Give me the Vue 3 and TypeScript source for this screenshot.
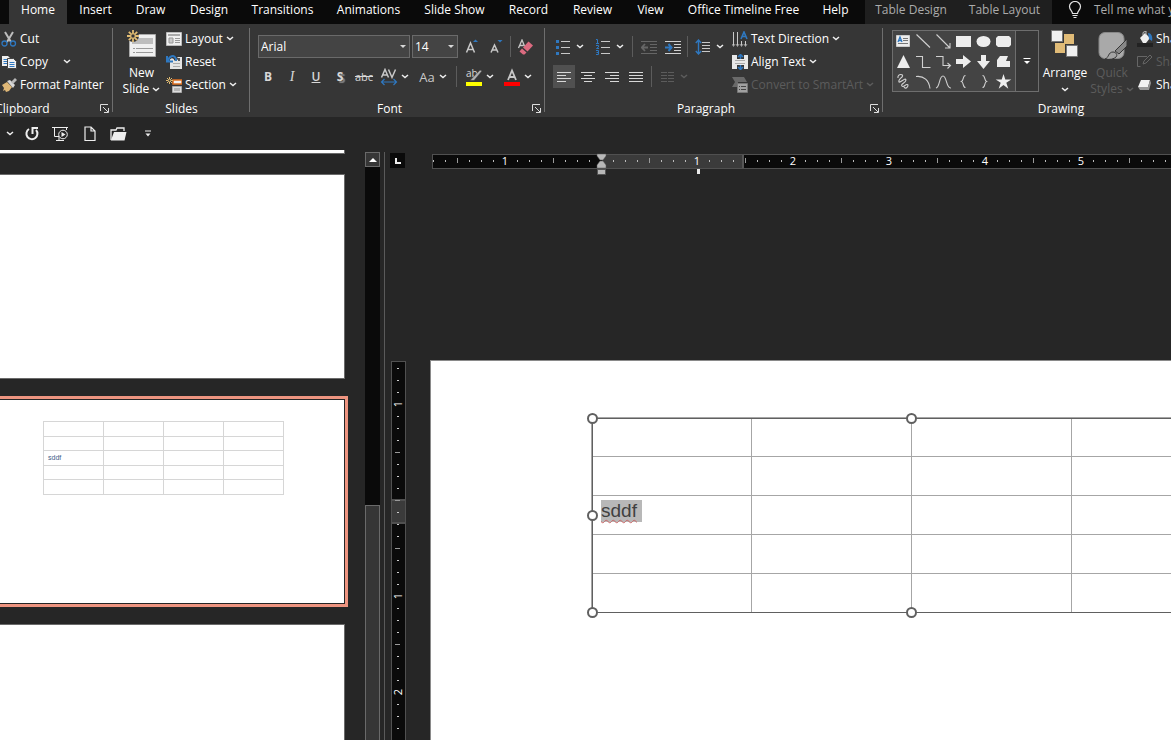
<script setup lang="ts">
import { ref } from 'vue'

const tabs: string[] = [
  'Home', 'Insert', 'Draw', 'Design', 'Transitions', 'Animations', 'Slide Show',
  'Record', 'Review', 'View', 'Office Timeline Free', 'Help',
]
const contextTabs: string[] = ['Table Design', 'Table Layout']
const active = ref('Home')

const fontName = ref('Arial')
const fontSize = ref('14')

const rows = 5
const cols = 4
const cellText = (r: number, c: number): string => (r === 3 && c === 1 ? 'sddf' : '')

interface Tick { at: number; kind: 'dot' | 'half' | 'label'; label: string }

const STEP = 12
function makeTicks(zero: number, from: number, to: number): Tick[] {
  const out: Tick[] = []
  for (let i = from; i <= to; i++) {
    if (i === 0) continue
    const kind = i % 8 === 0 ? 'label' : i % 4 === 0 ? 'half' : 'dot'
    out.push({ at: zero + i * STEP, kind, label: String(Math.abs(i / 8)) })
  }
  return out
}
const hTicks = makeTicks(169, -14, 120)
const vTicks = makeTicks(139, -11, 90)

const aligns: { name: string; d: string }[] = [
  { name: 'Align left', d: 'M1 2.5h14M1 5.5h9M1 8.5h14M1 11.5h9' },
  { name: 'Center', d: 'M1 2.5h14M4 5.5h8M1 8.5h14M4 11.5h8' },
  { name: 'Align right', d: 'M1 2.5h14M6 5.5h9M1 8.5h14M6 11.5h9' },
  { name: 'Justify', d: 'M1 2.5h14M1 5.5h14M1 8.5h14M1 11.5h14' },
]

interface Shape { name: string; fill?: string; line?: string }
const shapes: Shape[] = [
  { name: 'Text box' },
  { name: 'Line', line: 'M3.5 3.5L17 16.5' },
  { name: 'Arrow', line: 'M3.5 3.5L16.5 16.5M17 12v5h-5' },
  { name: 'Rectangle', fill: 'M3 5h15v11H3z' },
  { name: 'Oval', fill: 'M3.5 10.5a7 5.5 0 1 0 14 0a7 5.5 0 1 0 -14 0z' },
  { name: 'Rounded rectangle', fill: 'M5 5h11l2 2v7l-2 2H5l-2-2V7z' },
  { name: 'Triangle', fill: 'M10.5 4L17 17H4z' },
  { name: 'Elbow connector', line: 'M3 5.5h6.500v11h8' },
  { name: 'Elbow arrow', line: 'M3 5.500h7v9h7M14.500 12l3 2.500l-3 3' },
  { name: 'Right arrow', fill: 'M3 8h7V4l8 6.500l-8 6.500v-4H3z' },
  { name: 'Down arrow', fill: 'M8 4h5v6h4l-6.500 8L4 10h4z' },
  { name: 'Freeform', fill: 'M7 5h8l-2 5h4v6H4V9z' },
  { name: 'Scribble', line: 'M5 7c-1-5 7-4 4-1c-2 2-4 3-3 5c2 1 6-5 7-2c0 3-6 4-4 6c1 2 5-3 6-1c0 3-3 4-4 2' },
  { name: 'Arc', line: 'M3 5.500c8-1 13 4 14 12' },
  { name: 'Curve', line: 'M3 17c4-1 3-12 7-12s3 13 8 12' },
  { name: 'Left brace', line: 'M12.500 4.500c-3 0-1.500 5-4 6c2.500 1 1 6 4 6' },
  { name: 'Right brace', line: 'M9.500 4.500c3 0 1.500 5 4 6c-2.500 1-1 6-4 6' },
  { name: 'Star', fill: 'M10.500 3l1.800 5.500h6l-5 3.200l2 6l-4.800-3.700l-4.800 3.700l2-6l-5-3.200h6z' },
]
</script>

<template>
  <div class="app">
    <nav class="tabs" aria-label="Ribbon tabs">
      <button v-for="t in tabs" :key="t" class="tab" :class="{ on: active === t }" @click="active = t">{{ t }}</button>
      <span></span>
      <button v-for="t in contextTabs" :key="t" class="tab context" @click="active = t">{{ t }}</button>
      <button class="tell">
        <svg width="14" height="18" viewBox="0 0 14 18" fill="none" stroke="#e4e4e4" stroke-width="1.2"><path d="M4.500 12.500C4.500 10 1.500 9 1.500 5.500a5.500 5 0 0 1 11 0c0 3.500-3 4.500-3 7zM4.500 14.500h5M5.500 16.500h3" /></svg>
        <span>Tell me what you want to do</span>
      </button>
    </nav>

    <section class="ribbon">
      <div class="group clipboard">
        <div class="list">
          <button class="cmd">
            <svg width="16" height="16" viewBox="0 0 16 16" fill="none"><path d="M4 1l6 10M12 1L6 11" stroke="#bdbdbd" stroke-width="2" /><circle cx="3.500" cy="12.500" r="2.500" stroke="#2f78c0" stroke-width="1.300" /><circle cx="12" cy="12.500" r="2.500" stroke="#2f78c0" stroke-width="1.300" /></svg>
            <span>Cut</span>
          </button>
          <button class="cmd">
            <svg width="16" height="16" viewBox="0 0 16 16"><path d="M1 2h6l2 2v8H1z" fill="#efefef" /><path d="M2.500 5.500h4M2.500 7.500h4M2.500 9.500h4" stroke="#2f78c0" /><path d="M6.500 4.500h6l3 3v7h-9z" fill="#efefef" stroke="#444" /><path d="M8.500 8.500h5M8.500 10.500h5M8.500 12.500h5" stroke="#2f78c0" /></svg>
            <span>Copy</span>
            <svg class="chev far" viewBox="0 0 8 5"><path d="M1 1l3 2.500L7 1" /></svg>
          </button>
          <button class="cmd">
            <svg width="16" height="16" viewBox="0 0 16 16"><path d="M1 8l5-3 5 5-3 4-3 1-1-2-2 1 1-3z" fill="#e0b877" /><path d="M6 4l3-1 5 5-2 3z" fill="#d8d8d8" /><path d="M10 5l4-4 2 2-4 4z" fill="#b8b8b8" /></svg>
            <span>Format Painter</span>
          </button>
        </div>
        <footer class="label"><span class="cut">Clipboard</span>
          <button class="launch" aria-label="Clipboard settings"><svg width="9" height="9" viewBox="0 0 9 9"><path d="M.5 7V.5H8M3 3l5 5M8.500 4v4.500H4" /></svg></button>
        </footer>
      </div>

      <div class="group slides">
        <div class="body">
          <button class="big">
            <svg width="32" height="30" viewBox="0 0 32 30"><path d="M3.500 5.500h26v22h-26z" fill="#f0f0f0" stroke="#aaa" /><path d="M6 9h21v6H6z" fill="#bdbdbd" /><path d="M7 19.500h2M10 19.500h17M7 23.500h2M10 23.500h17" stroke="#999" /><circle cx="7" cy="7" r="6" fill="#363636" /><path d="M7 1v12M1 7h12M2.800 2.800l8.400 8.400M11.200 2.800l-8.400 8.400" stroke="#e0bb72" stroke-width="1.800" /><circle cx="7" cy="7" r="2.200" fill="#363636" stroke="#e0bb72" /></svg>
            <span>New</span>
            <span>Slide <svg class="chev" viewBox="0 0 8 5"><path d="M1 1l3 2.500L7 1" /></svg></span>
          </button>
          <div class="list">
            <button class="cmd">
              <svg width="16" height="16" viewBox="0 0 16 16"><path d="M.5 1.500h15v13H.5z" fill="#f0f0f0" stroke="#bbb" /><path d="M2 3h12v2H2z" fill="#aaa" /><path d="M3 7h4v5H3z" fill="#ccc" stroke="#999" /><path d="M9 7.500h5M9 9.500h5M9 11.500h5" stroke="#999" /></svg>
              <span>Layout</span><svg class="chev" viewBox="0 0 8 5"><path d="M1 1l3 2.500L7 1" /></svg>
            </button>
            <button class="cmd">
              <svg width="16" height="16" viewBox="0 0 16 16"><path d="M4 3h12v12H4z" fill="#e4e4e4" /><path d="M7 9.500h7M7 12.500h7" stroke="#aaa" /><path d="M13 4v3" stroke="#555" stroke-width="2" /><path d="M1.500 7C2 2 8 0 10.500 6" stroke="#363636" stroke-width="4" fill="none" /><path d="M2 7C3 2 8 0 10 5v2M1 2v5.500h6" fill="none" stroke="#2f78c0" stroke-width="2" /></svg>
              <span>Reset</span>
            </button>
            <button class="cmd">
              <svg width="16" height="16" viewBox="0 0 16 16"><path d="M7 3h9v4H7z" fill="#f0f0f0" stroke="#e07020" stroke-width="1.500" /><path d="M6.500 9.500h9v6h-9z" fill="#ddd" stroke="#aaa" /><path d="M8 11h6v3H8z" fill="#b5b5b5" /><path d="M3.500 0v7M0 3.500h7M1 1l5 5M6 1L1 6" stroke="#e0bb72" /><circle cx="3.500" cy="3.500" r="1" fill="#363636" /></svg>
              <span>Section</span><svg class="chev" viewBox="0 0 8 5"><path d="M1 1l3 2.500L7 1" /></svg>
            </button>
          </div>
        </div>
        <footer class="label"><span>Slides</span></footer>
      </div>

      <div class="group font">
        <div class="tools">
          <div class="line first">
            <span class="combo wide">
              <select v-model="fontName" aria-label="Font"><option>Arial</option><option>Calibri</option></select>
              <svg width="6" height="4" viewBox="0 0 6 4"><path d="M0 0h6L3 3z" fill="#d8d8d8" /></svg>
            </span>
            <span class="combo small">
              <select v-model="fontSize" aria-label="Font size"><option>14</option><option>18</option></select>
              <svg width="6" height="4" viewBox="0 0 6 4"><path d="M0 0h6L3 3z" fill="#d8d8d8" /></svg>
            </span>
            <button class="tool" aria-label="Increase font size"><svg width="16" height="16" viewBox="0 0 16 16"><path d="M2.500 13.500L6.500 4l4 9.500M4 10.500h5" fill="none" stroke="#c8c8c8" stroke-width="1.500" /><path d="M9 3h5l-2.500-2.500z" fill="#2f78c0" /></svg></button>
            <button class="tool" aria-label="Decrease font size"><svg width="16" height="16" viewBox="0 0 16 16"><path d="M3 13.500L6.500 6l3.500 7.500M4.500 11h4" fill="none" stroke="#c8c8c8" stroke-width="1.500" /><path d="M9.500 1h5L12 3.500z" fill="#2f78c0" /></svg></button>
            <i class="sep"></i>
            <button class="tool" aria-label="Clear formatting"><svg width="16" height="16" viewBox="0 0 16 16"><path d="M1.500 9L5 1l2.500 6M2.500 6.500h4" fill="none" stroke="#c8c8c8" stroke-width="1.300" /><path d="M11.500 2.500l4.500 4-5.500 6-4.500-4z" fill="#dc6b80" /><path d="M5 9.500l4.500 4-2 2H6l-3.500-3z" fill="#dc6b80" /></svg></button>
          </div>
          <div class="line second">
            <button class="tool glyph"><b>B</b></button>
            <button class="tool glyph serif"><i>I</i></button>
            <button class="tool glyph"><u>U</u></button>
            <button class="tool glyph shadow"><b>S</b></button>
            <button class="tool strike"><s>abc</s></button>
            <button class="split" aria-label="Character spacing"><svg width="18" height="18" viewBox="0 0 18 18"><path d="M1.500 9.500L5 1.500l3.500 8M2.800 7h4.400M8.500 1.500l3.500 8 3.500-8" fill="none" stroke="#c8c8c8" stroke-width="1.500" /><path d="M1.500 14h15M4.500 11l-3 3 3 3M13.500 11l3 3-3 3" fill="none" stroke="#2f78c0" stroke-width="1.200" /></svg><svg class="chev" viewBox="0 0 8 5"><path d="M1 1l3 2.500L7 1" /></svg></button>
            <button class="split"><span class="case">Aa</span><svg class="chev" viewBox="0 0 8 5"><path d="M1 1l3 2.500L7 1" /></svg></button>
            <i class="sep gap"></i>
            <button class="split" aria-label="Highlight color"><svg width="18" height="18" viewBox="0 0 18 18"><text x="1" y="9" fill="#d8d8d8" font-size="10">ab</text><path d="M5 12.500L15 2l2 1-8 9.500z" fill="#b0b0b0" stroke="#363636" stroke-width=".5" /><path d="M1 14h16v4H1z" fill="#ff0" /></svg><svg class="chev" viewBox="0 0 8 5"><path d="M1 1l3 2.500L7 1" /></svg></button>
            <button class="split" aria-label="Font color"><svg width="18" height="18" viewBox="0 0 18 18"><path d="M5 12L9 2.500 13 12M6.500 9h5" fill="none" stroke="#c8c8c8" stroke-width="1.800" /><path d="M1 14h16v4H1z" fill="red" /></svg><svg class="chev" viewBox="0 0 8 5"><path d="M1 1l3 2.500L7 1" /></svg></button>
          </div>
        </div>
        <footer class="label"><span>Font</span>
          <button class="launch" aria-label="Font settings"><svg width="9" height="9" viewBox="0 0 9 9"><path d="M.5 7V.5H8M3 3l5 5M8.500 4v4.500H4" /></svg></button>
        </footer>
      </div>

      <div class="group paragraph">
        <div class="body">
          <div class="tools">
            <div class="line">
              <button class="split" aria-label="Bullets"><svg width="16" height="16" viewBox="0 0 16 16"><path d="M1 1h3v3H1zM1 7h3v3H1zM1 13h3v3H1z" fill="#2f78c0" /><path d="M6 2.500h9M6 8.500h9M6 14.500h9" stroke="#c8c8c8" /></svg><svg class="chev" viewBox="0 0 8 5"><path d="M1 1l3 2.500L7 1" /></svg></button>
              <button class="split next" aria-label="Numbering"><svg width="16" height="16" viewBox="0 0 16 16"><path d="M1 .5h1.500V4M1 4.500h3M1 6.500h2.500v1.500L1.500 9.500H4M1 11.500h2.500v4H1M1.500 13.500h2" stroke="#2f78c0" fill="none" /><path d="M6 2.500h9M6 8.500h9M6 14.500h9" stroke="#c8c8c8" /></svg><svg class="chev" viewBox="0 0 8 5"><path d="M1 1l3 2.500L7 1" /></svg></button>
              <i class="sep gap"></i>
              <button class="tool" aria-label="Decrease indent" disabled><svg width="16" height="16" viewBox="0 0 16 16"><path d="M0 2.500h16M9 5.500h7M9 8.500h7M9 11.500h7M0 14.500h16" stroke="#666" /><path d="M1 8.500h6M4 5L.8 8.500 4 12" fill="none" stroke="#666" stroke-width="1.800" /></svg></button>
              <button class="tool" aria-label="Increase indent"><svg width="16" height="16" viewBox="0 0 16 16"><path d="M0 2.500h16M9 5.500h7M9 8.500h7M9 11.500h7M0 14.500h16" stroke="#d0d0d0" /><path d="M0 8.500h6M3.500 5l3 3.500-3 3.500" fill="none" stroke="#2f78c0" stroke-width="2" /></svg></button>
              <i class="sep"></i>
              <button class="split" aria-label="Line spacing"><svg width="16" height="16" viewBox="0 0 16 16"><path d="M3.500 1v14M.8 4l2.700-3 2.700 3M.8 12l2.700 3 2.700-3" fill="none" stroke="#2f78c0" stroke-width="1.400" /><path d="M7 3.500h8M7 6.500h8M7 9.500h8M7 12.500h8" stroke="#c8c8c8" /></svg><svg class="chev" viewBox="0 0 8 5"><path d="M1 1l3 2.500L7 1" /></svg></button>
            </div>
            <div class="line second">
              <button v-for="(a, i) in aligns" :key="a.name" class="tool align" :class="{ on: i === 0 }" :aria-label="a.name"><svg width="16" height="14" viewBox="0 0 16 14"><path :d="a.d" stroke="#d8d8d8" /></svg></button>
              <i class="sep"></i>
              <button class="split" aria-label="Columns" disabled><svg width="16" height="14" viewBox="0 0 16 14"><path d="M2 2.500h6M2 5.500h6M2 8.500h6M2 11.500h6M9 2.500h6M9 5.500h6M9 8.500h6M9 11.500h6" stroke="#5c5c5c" /></svg><svg class="chev" viewBox="0 0 8 5"><path d="M1 1l3 2.500L7 1" /></svg></button>
            </div>
          </div>
          <div class="list">
            <button class="cmd">
              <svg width="16" height="16" viewBox="0 0 16 16"><path d="M1.500 1v14M5.500 1v14M9.500 10v5M13.500 10v5" stroke="#c8c8c8" /><path d="M0 13l1.500 2.500L3 13M4 13l1.500 2.500L7 13M8 13l1.500 2.500L11 13M12 13l1.500 2.500L15 13" fill="none" stroke="#999" /><path d="M9 8l3-7 3 7M10 5.500h4" fill="none" stroke="#2f78c0" stroke-width="1.600" /></svg>
              <span>Text Direction</span><svg class="chev" viewBox="0 0 8 5"><path d="M1 1l3 2.500L7 1" /></svg>
            </button>
            <button class="cmd">
              <svg width="16" height="16" viewBox="0 0 16 16"><path d="M0 1h16v14H0z" fill="#e8e8e8" /><path d="M5 0h7v5H5zM5 11h7v5H5z" fill="#363636" /><path d="M3 6.500h10M3 9.500h10" stroke="#aaa" /><path d="M8.500 0v5M6 3l2.500-2.500L11 3M8.500 11v5M6 13l2.500 2.500L11 13" fill="none" stroke="#2f78c0" stroke-width="1.500" /></svg>
              <span>Align Text</span><svg class="chev" viewBox="0 0 8 5"><path d="M1 1l3 2.500L7 1" /></svg>
            </button>
            <button class="cmd" disabled>
              <svg width="16" height="16" viewBox="0 0 16 16"><path d="M0 0h12l3 5H6v5H0l3-5z" fill="#6a6a6a" /><path d="M5.500 6.500h10v9h-10z" fill="#a0a0a0" stroke="#777" /><path d="M7 9.500h1M9 9.500h5M7 12.500h1M9 12.500h5" stroke="#444" /></svg>
              <span>Convert to SmartArt</span><svg class="chev" viewBox="0 0 8 5"><path d="M1 1l3 2.500L7 1" /></svg>
            </button>
          </div>
        </div>
        <footer class="label"><span>Paragraph</span>
          <button class="launch" aria-label="Paragraph settings"><svg width="9" height="9" viewBox="0 0 9 9"><path d="M.5 7V.5H8M3 3l5 5M8.500 4v4.500H4" /></svg></button>
        </footer>
      </div>

      <div class="group drawing">
        <div class="body">
          <div class="gallery">
            <div class="shapes">
              <button v-for="(s, i) in shapes" :key="s.name" :aria-label="s.name">
                <svg width="20" height="20" viewBox="0 0 20 20">
                  <template v-if="i === 0"><path d="M3.500 4.500h13v11h-13z" fill="#ededed" stroke="#ccc" /><path d="M5 11l2-5 2 5M6 9.500h2" fill="none" stroke="#2f78c0" stroke-width="1.300" /><path d="M10 7.500h5M10 9.500h5M5 12.500h10" stroke="#777" /></template>
                  <path v-else-if="s.fill" :d="s.fill" fill="#ededed" />
                  <path v-else :d="s.line" fill="none" stroke="#d0d0d0" stroke-width="1.100" />
                </svg>
              </button>
            </div>
            <button class="more" aria-label="More shapes"><svg width="8" height="8" viewBox="0 0 8 8"><path d="M.5 1.500h7" stroke="#fff" /><path d="M1 4l3 3 3-3z" fill="#fff" /></svg></button>
          </div>
          <button class="big arrange">
            <svg width="30" height="30" viewBox="0 0 30 30"><path d="M14 5h10v10H14zM5 14h10v10H5z" fill="#e0bb77" /><path d="M1.500 1.500h11v11h-11zM16.500 16.500h11v11h-11z" fill="#f0f0f0" stroke="#777" /></svg>
            <span>Arrange</span>
            <svg class="chev" viewBox="0 0 8 5"><path d="M1 1l3 2.500L7 1" /></svg>
          </button>
          <button class="big quick" disabled>
            <svg width="30" height="30" viewBox="0 0 30 30"><rect x="2" y="3.500" width="25" height="26" rx="6" fill="#a9a9a9" stroke="#888" /><path d="M30 10v7l-8 8-4-3z" fill="#888" stroke="#363636" /><path d="M8 30c4-1 3-7 8-7 3 0 5 3 3 5-2 2-6 3-11 2z" fill="#a4a4a4" stroke="#363636" /></svg>
            <span>Quick</span>
            <span>Styles <svg class="chev" viewBox="0 0 8 5"><path d="M1 1l3 2.500L7 1" /></svg></span>
          </button>
          <div class="list">
            <button class="cmd">
              <svg width="16" height="16" viewBox="0 0 16 16"><path d="M3 7l5-5 5 5-4 5H6z" fill="#eee" /><path d="M6 4V1.500L9 0v4" fill="none" stroke="#bbb" /><path d="M11 2c3 0 5 3 4 8l-3-2z" fill="#2f78c0" /><path d="M0 12h16v4H0z" fill="#222" /></svg>
              <span>Shape Fill</span>
            </button>
            <button class="cmd" disabled>
              <svg width="16" height="16" viewBox="0 0 16 16" fill="none" stroke="#666"><path d="M10 2.500H.5v10h3M6 10l1-3 6-6 2 2-6 6z" /></svg>
              <span>Shape Outline</span>
            </button>
            <button class="cmd">
              <svg width="16" height="16" viewBox="0 0 16 16"><path d="M4 3h9l-2 7H1z" fill="#f2f2f2" /><path d="M1 10h10l2-7 1 3-2 7H3z" fill="#999" /></svg>
              <span>Shape Effects</span>
            </button>
          </div>
        </div>
        <footer class="label"><span>Drawing</span></footer>
      </div>
    </section>

    <div class="quickbar">
      <button aria-label="Undo options"><svg class="chev" viewBox="0 0 8 5"><path d="M1 1l3 2.500L7 1" /></svg></button>
      <button aria-label="Repeat"><svg width="16" height="16" viewBox="0 0 16 16" fill="none" stroke="#eee" stroke-width="2"><path d="M5 3a5.500 5.500 0 1 0 7 1M8.500 8V2H14" /></svg></button>
      <button aria-label="Start slide show"><svg width="17" height="16" viewBox="0 0 17 16" fill="none" stroke="#eee"><path d="M0 1.500h16M2.500 2v8.500H7M7 11v3M4 14.500h8M14.500 2v2" /><circle cx="11" cy="8.500" r="4.300" /><path d="M9.500 6l4 2.500-4 2.500z" fill="#eee" stroke="none" /></svg></button>
      <button aria-label="New file"><svg width="12" height="16" viewBox="0 0 12 16" fill="none" stroke="#eee" stroke-width="1.200"><path d="M1 1h6l4 4v9.500H1zM7 1v4h4" /></svg></button>
      <button aria-label="Open file"><svg width="17" height="14" viewBox="0 0 17 14"><path d="M1 13V3h5l1-2h7v3" fill="none" stroke="#eee" stroke-width="1.300" /><path d="M4 5h12.500l-2 8.500H.8z" fill="#eee" /></svg></button>
      <button aria-label="Customize toolbar"><svg width="6" height="7" viewBox="0 0 6 7"><path d="M0 1h6" stroke="#eee" /><path d="M.5 3.500h5L3 6.500z" fill="#eee" /></svg></button>
    </div>

    <main class="work">
      <aside class="thumbs">
        <div class="strip">
          <div v-for="n in 4" :key="n" class="thumb" :class="{ on: n === 3 }">
            <table v-if="n === 3" class="mini">
              <tbody><tr v-for="r in rows" :key="r"><td v-for="c in cols" :key="c">{{ cellText(r, c) }}</td></tr></tbody>
            </table>
          </div>
        </div>
      </aside>
      <div class="scroll">
        <button aria-label="Scroll up"><svg width="8" height="4" viewBox="0 0 8 4"><path d="M4 0l4 4H0z" fill="#fff" /></svg></button>
        <div class="track"></div>
        <div class="grip"></div>
      </div>

      <section class="editor">
        <button class="tabstop" aria-label="Tab stop"><svg width="6" height="6" viewBox="0 0 6 6"><path d="M1 0v5h5" fill="none" stroke="#eee" stroke-width="2" /></svg></button>
        <div class="hruler">
          <svg width="100%" height="22">
            <g shape-rendering="crispEdges">
              <rect x="0" y="1" width="100%" height="15" fill="#505050" />
              <rect x="1" y="2" width="100%" height="13" fill="#0a0a0a" />
              <rect x="170" y="2" width="141" height="13" fill="#3b3b3b" />
              <rect x="310" y="2" width="2" height="13" fill="#555" />
              <template v-for="t in hTicks" :key="t.at">
                <rect v-if="t.kind === 'dot'" :x="t.at" y="7" width="1" height="2" fill="#bbb" />
                <rect v-else-if="t.kind === 'half'" :x="t.at" y="5" width="1" height="5" fill="#999" />
              </template>
            </g>
            <template v-for="t in hTicks" :key="t.at">
              <text v-if="t.kind === 'label'" :x="t.at" y="12" class="num">{{ t.label }}</text>
            </template>
            <path d="M165 1h9v2l-3 4h-3l-3-4zM165 15v-3l3-4h3l3 4v3z" fill="#b8b8b8" stroke="#555" stroke-width=".5" />
            <path d="M165.500 16.500h8v5h-8z" fill="#b8b8b8" stroke="#555" />
            <path d="M265 16h3v5h-3z" fill="#e8e8e8" />
          </svg>
        </div>
        <div class="vruler">
          <svg width="15" height="100%">
            <g shape-rendering="crispEdges">
              <rect width="15" height="100%" fill="#505050" />
              <rect x="1" y="1" width="13" height="100%" fill="#0a0a0a" />
              <rect x="1" y="138" width="13" height="25" fill="#3b3b3b" />
              <path d="M1 138h13v1.500H1zM1 161h13v2H1z" fill="#505050" />
              <template v-for="t in vTicks" :key="t.at">
                <rect v-if="t.kind === 'dot'" x="6" :y="t.at" width="2" height="1" fill="#ccc" />
                <rect v-else-if="t.kind === 'half'" x="4" :y="t.at" width="5" height="1" fill="#999" />
              </template>
              <rect x="4" y="139" width="5" height="1" fill="#999" />
            </g>
            <template v-for="t in vTicks" :key="t.at">
              <text v-if="t.kind === 'label'" :transform="`translate(11 ${t.at}) rotate(-90)`" class="num">{{ t.label }}</text>
            </template>
          </svg>
        </div>
        <div class="slide">
          <div class="frame">
            <table class="grid">
              <tbody>
                <tr v-for="r in rows" :key="r">
                  <td v-for="c in cols" :key="c"><mark v-if="cellText(r, c)"><span>{{ cellText(r, c) }}</span>&nbsp;</mark></td>
                </tr>
              </tbody>
            </table>
            <i class="outline"></i>
            <i class="handle tl"></i><i class="handle tc"></i><i class="handle ml"></i><i class="handle bl"></i><i class="handle bc"></i>
          </div>
        </div>
      </section>
    </main>
  </div>
</template>

<style>
html, body { background: #262626; overflow: hidden; }
</style>

<style scoped>
.app {
  display: flex; flex-direction: column; height: 100vh; overflow: hidden;
  background: #262626; color: #fff;
  font: 12px/16px "Open Sans", "Noto Sans", sans-serif;
}
.app *, .app *::before, .app *::after { box-sizing: border-box; }
button { padding: 0; border: 0; background: none; color: inherit; font: inherit; white-space: nowrap; }
svg { display: block; flex: none; }
.chev { display: inline-block; width: 8px; height: 5px; fill: none; stroke: #eee; stroke-width: 1.5; }
button:disabled { color: #5c5c5c; }
button:disabled .chev { stroke: #5c5c5c; }

.tabs {
  display: grid; flex: none; height: 24px; padding-left: 9px; background: #0a0a0a; overflow: hidden;
  grid-template-columns: 58px 57px 53px 64px 83px 89px 83px 65px 63px 53px 133px 51px 4px 92px 95px 1fr;
}
.tab { display: flex; align-items: center; justify-content: center; height: 24px; padding-bottom: 4px; }
.tab.on { background: #363636; }
.tab.context { background: #1f1f1f; color: #ababab; }
.tell { display: flex; align-items: center; gap: 12px; min-width: 0; height: 20px; padding-left: 16px; color: #ababab; }

.ribbon { display: flex; flex: none; height: 93px; background: #363636; overflow: hidden; }
.group { position: relative; display: flex; flex: none; flex-direction: column; height: 93px; }
.group:not(:last-child)::after { content: ""; position: absolute; top: 4px; right: 0; bottom: 5px; width: 1px; background: #6e6e6e; }
.clipboard { width: 113px; }
.slides { width: 137px; }
.font { width: 295px; }
.paragraph { width: 338px; }
.drawing { width: 356px; }
.body { display: flex; }
.label { display: flex; align-items: center; justify-content: center; margin-top: auto; height: 18px; padding-top: 2px; }
.label .cut { margin-left: -68px; }
.launch { position: absolute; right: 4px; bottom: 4px; }
.font .label { padding-right: 16px; }
.paragraph .label { padding-right: 16px; }
.launch path { fill: none; stroke: #ddd; }

.list { display: flex; flex-direction: column; padding-top: 3px; }
.cmd { display: flex; align-items: center; gap: 3px; height: 23px; }
.cmd .far { margin-left: 12px; }
.clipboard .cmd { padding-left: 1px; }
.big { display: flex; flex-direction: column; align-items: center; padding-top: 5px; }
.big > svg:first-child { margin-bottom: 6px; }
.big .chev { vertical-align: 1px; }
.slides .big { width: 53px; padding-left: 4px; }

.tools { display: flex; flex-direction: column; gap: 7px; padding-top: 11px; }
.line { display: flex; align-items: center; height: 23px; }
.font .line { padding-left: 6px; }
.font .first { padding-left: 8px; }
.combo { position: relative; height: 23px; margin-right: 2px; }
.combo select {
  appearance: none; display: block; width: 100%; height: 23px; padding: 0 2px; border: 1px solid #6a6a6a; border-radius: 0;
  background: #444; color: #fff; font: inherit;
}
.combo svg { position: absolute; right: 4px; top: 10px; }
.combo.wide { width: 152px; }
.combo.small { width: 46px; }
.tool { display: flex; align-items: center; justify-content: center; width: 24px; height: 23px; }
.split { display: flex; align-items: center; width: 38px; height: 23px; padding-left: 4px; }
.split > :first-child { width: 18px; margin-right: 3px; }
.paragraph .split > :first-child { margin-right: 4px; }
.split.next { margin-left: 2px; }
.split .case { color: #c8c8c8; font-size: 13px; }
.sep { flex: none; width: 1px; height: 21px; margin: 0 2px; background: #5c5c5c; }
.sep.gap { margin: 0 4px; }
.glyph { color: #d8d8d8; }
.glyph u { font-weight: 600; }
.serif { font-family: "Liberation Serif", serif; font-size: 14px; }
.shadow { text-shadow: 2px 2px 1px #888; }
.strike { font-size: 11px; color: #d8d8d8; }
.paragraph .tools { width: 187px; padding-left: 5px; }
.paragraph .second { padding-left: 3px; }
.align { width: 22px; margin-right: 2px; }
.align.on { background: #505050; }

.drawing .body { padding-left: 9px; }
.gallery { display: flex; height: 62px; margin-top: 6px; border: 1px solid #6e6e6e; background: #444; }
.shapes { display: grid; grid-template-columns: repeat(6, 20px); grid-auto-rows: 20px; padding-right: 2px; }
.more { display: flex; align-items: center; justify-content: center; width: 23px; border-left: 1px solid #6e6e6e; background: #363636; }
.arrange { width: 52px; }
.arrange > .chev { margin-top: 6px; }
.quick { width: 42px; }
.drawing .list { padding-left: 4px; }

.quickbar { display: flex; flex: none; align-items: center; height: 33px; }
.quickbar button { display: flex; align-items: center; justify-content: center; width: 29px; height: 24px; }
.quickbar button:first-child { width: 17px; padding-left: 3px; }

.work { display: flex; flex: 1; min-height: 0; }
.thumbs { width: 365px; flex: none; overflow: hidden; }
.strip { display: flex; flex-direction: column; gap: 20px; width: 345px; margin-top: -201px; }
.thumb { flex: none; height: 205px; border: 1px solid #6a6a6a; border-left: 0; background: #fff; }
.thumb.on { border-color: #262626; box-shadow: 0 0 0 3px #ee9480; }
.mini { width: 241px; height: 74px; margin: 21px 0 0 43px; border-collapse: collapse; table-layout: fixed; color: #3e5c88; font: 7px/8px "Liberation Sans", sans-serif; }
.mini td { height: 14px; padding: 0 4px; border: 1px solid #d6d6d6; }
.scroll { display: flex; flex: none; flex-direction: column; width: 20px; margin-top: 2px; padding-right: 4px; border-right: 1px solid #5a5a5a; }
.scroll button { display: flex; align-items: center; justify-content: center; height: 15px; border: 1px solid #6a6a6a; background: #363636; }
.track { height: 338px; background: #0a0a0a; }
.grip { flex: 1; border: 1px solid #6a6a6a; border-bottom: 0; background: #363636; }

.editor { display: grid; flex: 1; min-width: 0; padding: 3px 0 0 6px; grid-template-columns: 15px minmax(0, 1fr); grid-template-rows: 207px minmax(0, 1fr); column-gap: 24px; }
.tabstop { display: flex; align-items: center; justify-content: center; width: 15px; height: 15px; margin-left: -1px; background: #0a0a0a; }
.hruler { margin-left: 2px; overflow: hidden; }
.num { fill: #fff; font-size: 11px; text-anchor: middle; }
.vruler { margin-top: 1px; overflow: hidden; }
.slide { border: 1px solid #8a8a8a; border-width: 1px 0 0 1px; background: #fff; overflow: hidden; }
.frame { position: relative; width: 641px; margin: 56px 0 0 160px; }
.grid { width: 641px; border-collapse: collapse; table-layout: fixed; color: #404040; font: 19px/22px "Liberation Sans", Arial, sans-serif; }
.grid td { height: 39px; padding: 4px 9px 0; border: 1px solid #a6a6a6; vertical-align: top; }
.outline { position: absolute; inset: 1px 0 0 1px; border: 1px solid #606060; }
mark { display: block; width: max-content; background: #b8b8b8; color: #404040; }
mark span { text-decoration: underline wavy #c86464 1px; text-underline-offset: 2px; }
.handle { position: absolute; width: 11px; height: 11px; border: 2px solid #606060; border-radius: 50%; background: #fff; }
.tl { left: -4px; top: -4px; }
.tc { left: 315px; top: -4px; }
.ml { left: -4px; top: 93px; }
.bl { left: -4px; bottom: -5px; }
.bc { left: 315px; bottom: -5px; }
</style>
